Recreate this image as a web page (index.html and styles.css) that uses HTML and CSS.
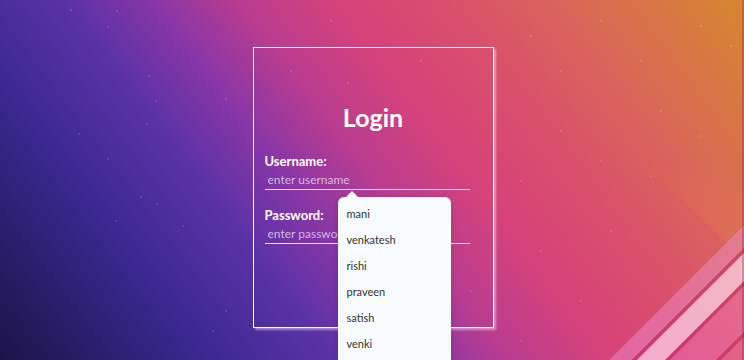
FILE: index.html
```html
<!DOCTYPE html>
<html lang="en">
<head>
<meta charset="utf-8">
<title>Login</title>
<link rel="stylesheet" href="styles.css">
</head>
<body>
<div class="specks"></div>
<svg class="stripes" width="200" height="200" viewBox="0 0 200 200" aria-hidden="true">
  <defs>
    <linearGradient id="glow" x1="0" y1="0" x2="0" y2="1">
      <stop offset="0" stop-color="rgb(235,130,70)" stop-opacity="0"/>
      <stop offset="0.7" stop-color="rgb(235,130,70)" stop-opacity="0.22"/>
      <stop offset="1" stop-color="rgb(235,130,70)" stop-opacity="0.25"/>
    </linearGradient>
  </defs>
  <polygon points="94,0 183,82 200,64 200,0" fill="url(#glow)"/>
  <line x1="336.5" y1="-60" x2="16.5" y2="260" stroke="rgba(245,160,230,0.38)" stroke-width="16"/>
  <line x1="350.5" y1="-60" x2="30.5" y2="260" stroke="rgba(190,30,110,0.40)" stroke-width="3.5"/>
  <line x1="367" y1="-60" x2="47" y2="260" stroke="rgba(255,222,246,0.68)" stroke-width="20"/>
  <line x1="383.5" y1="-60" x2="63.5" y2="260" stroke="rgba(190,30,110,0.40)" stroke-width="3.5"/>
  <line x1="409" y1="-60" x2="89" y2="260" stroke="rgba(250,130,220,0.34)" stroke-width="32.5"/>
  <line x1="434.5" y1="-60" x2="114.5" y2="260" stroke="rgba(190,30,110,0.40)" stroke-width="3.5"/>
  <line x1="458" y1="-60" x2="138" y2="260" stroke="rgba(250,140,225,0.25)" stroke-width="30"/>
</svg>
<div class="edge"></div>
<main class="card">
  <h1 class="title">Login</h1>
  <div class="field">
    <label class="label" for="user">Username:</label>
    <input class="input" id="user" type="text" placeholder="enter username">
  </div>
  <div class="field field-second">
    <label class="label" for="pass">Password:</label>
    <input class="input" id="pass" type="password" placeholder="enter password">
  </div>
  <ul class="suggest">
    <li class="suggest-item">mani</li>
    <li class="suggest-item">venkatesh</li>
    <li class="suggest-item">rishi</li>
    <li class="suggest-item">praveen</li>
    <li class="suggest-item">satish</li>
    <li class="suggest-item">venki</li>
  </ul>
</main>
</body>
</html>
```

FILE: styles.css
```css
html, body {
  margin: 0;
  height: 360px;
  overflow: hidden;
}
body {
  position: relative;
  display: flex;
  justify-content: center;
  align-items: flex-start;
  padding-top: 47px;
  box-sizing: border-box;
  font-family: Lato, "Open Sans", sans-serif;
  background: linear-gradient(53deg,
    #1c1448 0%,
    #3a2890 20%,
    #5a32a6 33%,
    #8a36a6 42%,
    #b83c90 50%,
    #d6427a 60%,
    #d94e6c 70%,
    #d9665a 82%,
    #d6862f 100%);
}
.specks {
  position: absolute;
  left: 0;
  top: 0;
  width: 2px;
  height: 2px;
  border-radius: 50%;
  background: transparent;
  box-shadow:
    70px 9px rgba(255,255,255,.2), 116px 10px rgba(255,255,255,.16), 107px 26px rgba(255,255,255,.16),
    148px 75px rgba(255,255,255,.16), 155px 100px rgba(255,255,255,.14), 225px 98px rgba(255,255,255,.16),
    146px 123px rgba(255,255,255,.16), 78px 133px rgba(255,255,255,.14), 107px 158px rgba(255,255,255,.14),
    140px 196px rgba(255,255,255,.14), 156px 203px rgba(255,255,255,.14), 115px 220px rgba(255,255,255,.16),
    182px 225px rgba(255,255,255,.16), 225px 310px rgba(255,255,255,.14), 212px 330px rgba(255,255,255,.12),
    290px 70px rgba(255,255,255,.16), 347px 82px rgba(255,255,255,.16), 420px 60px rgba(255,255,255,.16),
    530px 35px rgba(255,255,255,.18), 560px 70px rgba(255,255,255,.16), 600px 20px rgba(255,255,255,.16),
    640px 60px rgba(255,255,255,.16), 700px 25px rgba(255,255,255,.18), 730px 45px rgba(255,255,255,.16),
    660px 110px rgba(255,255,255,.16), 700px 135px rgba(255,255,255,.16), 560px 130px rgba(255,255,255,.16),
    600px 160px rgba(255,255,255,.14), 520px 180px rgba(255,255,255,.16), 650px 175px rgba(255,255,255,.16),
    540px 250px rgba(255,255,255,.14), 580px 300px rgba(255,255,255,.14), 520px 340px rgba(255,255,255,.12),
    610px 230px rgba(255,255,255,.16), 470px 290px rgba(255,255,255,.12), 330px 20px rgba(255,255,255,.16);
}
.stripes {
  position: absolute;
  right: 0;
  bottom: 0;
}
.edge {
  position: absolute;
  right: 0;
  top: 0;
  width: 2px;
  height: 360px;
  background: rgba(110, 30, 60, .28);
}
.card {
  position: relative;
  width: 241px;
  height: 281px;
  margin-left: 2px;
  box-sizing: border-box;
  border: 1px solid #fff;
  box-shadow: 2px 2px 2px rgba(255,255,255,.45);
  padding: 54px 24px 0 11px;
  color: #fff;
}
.title {
  margin: 0 0 20px;
  text-align: center;
  font-size: 25px;
  line-height: 31px;
  font-weight: 700;
  padding-left: 13px;
}
.field-second {
  margin-top: 17px;
}
.label {
  display: block;
  font-size: 13px;
  line-height: 16px;
  font-weight: 700;
}
.input {
  display: block;
  width: 205px;
  height: 21px;
  box-sizing: border-box;
  margin: 0;
  padding: 0 3px;
  border: none;
  border-bottom: 1px solid rgba(255,240,255,.9);
  background: transparent;
  font-family: Lato, "Open Sans", sans-serif;
  font-size: 12px;
  color: #fff;
  outline: none;
}
.input::placeholder {
  color: rgba(228,210,238,.85);
}
.suggest {
  position: absolute;
  left: 84px;
  top: 149px;
  width: 113px;
  margin: 0;
  padding: 4px 0 10px;
  list-style: none;
  background: #f7fbfd;
  border-radius: 6px;
  box-shadow: 0 2px 6px rgba(0,0,0,.15);
}
.suggest::before {
  content: "";
  position: absolute;
  left: 8px;
  top: -6px;
  border-left: 6px solid transparent;
  border-right: 6px solid transparent;
  border-bottom: 6px solid #f7fbfd;
}
.suggest-item {
  padding-left: 9px;
  font-size: 11px;
  line-height: 26px;
  color: #333;
}
```
